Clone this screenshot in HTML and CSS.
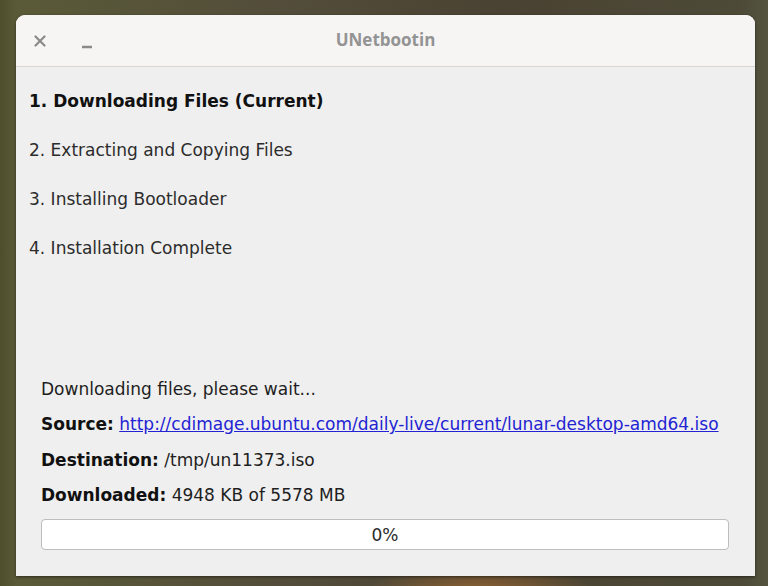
FILE: index.html
```html
<!DOCTYPE html>
<html>
<head>
<meta charset="utf-8">
<link rel="stylesheet" href="styles.css">
</head>
<body>
<div class="desktop">
  <div class="window">
    <header class="titlebar">
      <div class="controls">
        <span class="btn close">
          <svg width="12" height="12" viewBox="0 0 12 12"><path d="M1.5 1.5 L10.5 10.5 M10.5 1.5 L1.5 10.5" stroke="#8a8a8a" stroke-width="2.2" stroke-linecap="round"/></svg>
        </span>
        <span class="btn minimize">
          <svg width="12" height="12" viewBox="0 0 12 12"><path d="M1 10 L11 10" stroke="#8a8a8a" stroke-width="2.4"/></svg>
        </span>
      </div>
      <div class="title">UNetbootin</div>
    </header>
    <main class="content">
      <ol class="steps">
        <li class="current">1. Downloading Files (Current)</li>
        <li>2. Extracting and Copying Files</li>
        <li>3. Installing Bootloader</li>
        <li>4. Installation Complete</li>
      </ol>
      <section class="status">
        <p>Downloading files, please wait...</p>
        <p><b>Source:</b> <a href="#">http://cdimage.ubuntu.com/daily-live/current/lunar-desktop-amd64.iso</a></p>
        <p><b>Destination:</b> /tmp/un11373.iso</p>
        <p><b>Downloaded:</b> 4948 KB of 5578 MB</p>
        <div class="progress"><span>0%</span></div>
      </section>
    </main>
  </div>
</div>
</body>
</html>
```
FILE: styles.css
```css
html, body {
  margin: 0;
  padding: 0;
  width: 768px;
  height: 586px;
  overflow: hidden;
}
.desktop {
  width: 768px;
  height: 586px;
  box-sizing: border-box;
  padding: 15px 13px 10px 16px;
  background:
    radial-gradient(ellipse 120px 40px at 480px 600px, rgba(190,120,50,0.7), transparent),
    linear-gradient(90deg, #4f4e2c 0px, #5a5a38 16px, #524c3a 300px, #4a4232 500px, #4d4a38 740px, #54553e 768px);
}
.window {
  width: 739px;
  height: 561px;
  display: flex;
  flex-direction: column;
  background: #efefef;
  border-radius: 9px 9px 0 0;
  overflow: hidden;
  box-shadow: 0 1px 3px rgba(0,0,0,0.5);
  font-family: "DejaVu Sans", sans-serif;
}
.titlebar {
  height: 51px;
  flex: none;
  background: #f6f5f4;
  border-bottom: 1px solid #d8d4d0;
  position: relative;
  display: flex;
  align-items: center;
  justify-content: center;
}
.controls {
  position: absolute;
  left: 18px;
  top: 20px;
  display: flex;
  gap: 35px;
}
.btn {
  width: 12px;
  height: 12px;
  display: block;
}
.btn svg { display: block; }
.minimize { margin-top: 2px; }
.title {
  font-family: "Open Sans", sans-serif;
  font-weight: 700;
  font-size: 17px;
  color: #939393;
  margin-top: -2px;
}
.content {
  flex: 1;
  display: flex;
  flex-direction: column;
  justify-content: space-between;
  color: #222;
  font-size: 17px;
}
.steps {
  list-style: none;
  margin: 0;
  padding: 24px 0 0 13px;
  display: flex;
  flex-direction: column;
  gap: 29px;
}
.steps li {
  line-height: 20px;
  color: #2c2c2c;
}
.steps li.current {
  font-weight: 700;
  color: #111;
}
.status {
  padding: 0 26px 26px 25px;
  display: flex;
  flex-direction: column;
}
.status p {
  margin: 0;
  line-height: 20px;
  margin-bottom: 15.5px;
  color: #1e1e1e;
}
.status p b { color: #111; }
.status a {
  color: #2323d4;
  text-decoration: underline;
}
.status p:nth-of-type(4) { margin-bottom: 14px; }
.progress {
  height: 29px;
  border: 1px solid #bdbdbd;
  border-radius: 4px;
  background: #fff;
  display: flex;
  align-items: center;
  justify-content: center;
  font-size: 17px;
  color: #2a2a2a;
}
```
